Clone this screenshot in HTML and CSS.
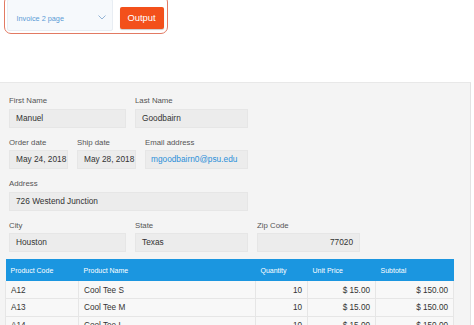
FILE: index.html
```html
<!DOCTYPE html>
<html lang="en">
<head>
    <meta charset="UTF-8">
    <meta name="viewport" content="width=device-width, initial-scale=1.0">
    <title>Invoice</title>
    <link rel="stylesheet" href="styles.css">
</head>
<body>
    <div class="toolbar">
        <div class="select">
            <span>Invoice 2 page</span>
            <svg width="8" height="5" viewBox="0 0 8 5">
                <polyline points="0.5,0.5 4,4 7.5,0.5" fill="none" stroke="#94b4d6" stroke-width="1"/>
            </svg>
        </div>
        <button class="output">Output</button>
    </div>

    <div class="panel">
        <div class="form">
            <div class="row">
                <div class="field w117">
                    <div class="label">First Name</div>
                    <div class="input">Manuel</div>
                </div>
                <div class="field w113">
                    <div class="label">Last Name</div>
                    <div class="input">Goodbairn</div>
                </div>
            </div>

            <div class="row">
                <div class="field w59">
                    <div class="label">Order date</div>
                    <div class="input">May 24, 2018</div>
                </div>
                <div class="field w59">
                    <div class="label">Ship date</div>
                    <div class="input">May 28, 2018</div>
                </div>
                <div class="field w103">
                    <div class="label">Email address</div>
                    <div class="input link">mgoodbairn0@psu.edu</div>
                </div>
            </div>

            <div class="row">
                <div class="field w239">
                    <div class="label">Address</div>
                    <div class="input">726 Westend Junction</div>
                </div>
            </div>

            <div class="row last">
                <div class="field w117">
                    <div class="label">City</div>
                    <div class="input">Houston</div>
                </div>
                <div class="field w113">
                    <div class="label">State</div>
                    <div class="input">Texas</div>
                </div>
                <div class="field w103">
                    <div class="label">Zip Code</div>
                    <div class="input num">77020</div>
                </div>
            </div>
        </div>

        <table class="items">
            <tr>
                <th class="c1">Product Code</th>
                <th class="c2">Product Name</th>
                <th class="c3">Quantity</th>
                <th class="c4">Unit Price</th>
                <th class="c5">Subtotal</th>
            </tr>
            <tr>
                <td>A12</td>
                <td>Cool Tee S</td>
                <td class="num">10</td>
                <td class="num">$ 15.00</td>
                <td class="num">$ 150.00</td>
            </tr>
            <tr>
                <td>A13</td>
                <td>Cool Tee M</td>
                <td class="num">10</td>
                <td class="num">$ 15.00</td>
                <td class="num">$ 150.00</td>
            </tr>
            <tr>
                <td>A14</td>
                <td>Cool Tee L</td>
                <td class="num">10</td>
                <td class="num">$ 15.00</td>
                <td class="num">$ 150.00</td>
            </tr>
        </table>
    </div>
</body>
</html>
```

FILE: styles.css
```css
body {
    margin: 0;
    background-color: #ffffff;
    font-family: "Liberation Sans", Arial, sans-serif;
    color: #333333;
    overflow: hidden;
}

.toolbar {
    display: flex;
    align-items: flex-start;
    gap: 7px;
    width: 159px;
    height: 34px;
    margin: -5px 0 0 4px;
    padding: 3px 1px 0 1.5px;
    border: 1.5px solid #e27a63;
    border-radius: 7px;
}

.select {
    display: flex;
    align-items: center;
    justify-content: space-between;
    width: 106px;
    height: 32px;
    padding: 6px 5px 0 9px;
    background-color: #f6f9fc;
    border: 1px solid #e8edf3;
    border-radius: 2px;
    box-sizing: border-box;
    color: #5a9bd6;
    font-size: 7.3px;
}

.select svg {
    margin-right: 1px;
    margin-top: -1px;
}

.output {
    margin-top: 7.5px;
    width: 44px;
    height: 22px;
    padding: 0;
    background-color: #f3501b;
    color: #ffffff;
    border: none;
    border-radius: 2px;
    box-shadow: 0 1px 1px rgba(0, 0, 0, 0.2);
    font-family: "Liberation Sans", Arial, sans-serif;
    font-size: 9.4px;
}

.panel {
    width: 470px;
    height: 260px;
    margin-top: 48px;
    background-color: #f4f4f4;
    border-top: 1px solid #e8e8e8;
    border-right: 1px solid #e2e2e2;
}

.form {
    padding: 13px 9px 0 9px;
}

.row {
    display: flex;
    gap: 9px;
    margin-bottom: 10px;
}

.row.last {
    margin-bottom: 7px;
}

.label {
    height: 10px;
    line-height: 10px;
    margin-bottom: 2.5px;
    font-size: 7.8px;
    color: #555555;
}

.input {
    height: 19px;
    line-height: 17px;
    padding: 0 6px;
    background-color: #ececec;
    border: 1px solid #e6e6e6;
    box-sizing: border-box;
    font-size: 8.3px;
    color: #333333;
    white-space: nowrap;
    overflow: hidden;
}

.input.link {
    color: #2b8fd9;
    padding-left: 5px;
}

.input.num {
    text-align: right;
}

.w117 { width: 117px; }
.w113 { width: 113px; }
.w59 { width: 59px; }
.w103 { width: 103px; }
.w239 { width: 239px; }

.items {
    margin-left: 5px;
    width: 448px;
    border-collapse: collapse;
    table-layout: fixed;
}

.items th {
    height: 22px;
    padding: 0 5px;
    background-color: #1b96e0;
    color: #ffffff;
    font-size: 7px;
    font-weight: normal;
    text-align: left;
}

.items .c1 { width: 63px; }
.items .c2 { width: 167px; }
.items .c3 { width: 42px; }
.items .c4 { width: 58px; }
.items .c5 { width: 68px; }

.items td {
    height: 17.5px;
    padding: 1px 5px 0 5px;
    background-color: #f8f8f8;
    border: 1px solid #e6e6e6;
    border-top: none;
    font-size: 8.2px;
    color: #333333;
    box-sizing: border-box;
}

.items td.num {
    text-align: right;
}
```
